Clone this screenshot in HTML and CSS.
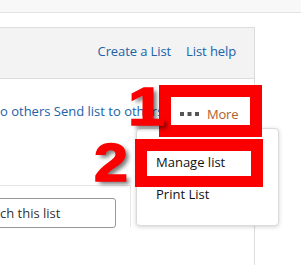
FILE: index.html
```html
<!DOCTYPE html>
<html>
<head>
<meta charset="utf-8">
<link rel="stylesheet" href="styles.css">
</head>
<body>
<div class="topbar"></div>
<div class="panel">
  <div class="panel-head">
    <a class="link" href="#">Create a List</a>
    <a class="link" href="#">List help</a>
  </div>
  <div class="panel-body">
    <div class="actions">
      <span class="send">o others Send list to others</span>
      <button class="more">
        <svg class="dots" width="19" height="4" viewBox="0 0 19 4"><rect x="0" y="0" width="4" height="4"/><rect x="7.5" y="0" width="4" height="4"/><rect x="15" y="0" width="4" height="4"/></svg>
        <span class="more-label">More</span>
      </button>
    </div>
    <div class="list-area">
      <div class="search-col">
        <div class="search">Search this list</div>
      </div>
    </div>
  </div>
</div>

<div class="dropdown">
  <div class="item">Manage list</div>
  <div class="item">Print List</div>
</div>

<div class="mark mark-1"></div>
<div class="mark mark-2"></div>
<span class="num num-1">1</span>
<span class="num num-2">2</span>
</body>
</html>
```
FILE: styles.css
```css
html, body {
  margin: 0;
  padding: 0;
}
body {
  width: 304px;
  height: 265px;
  overflow: hidden;
  background: #fff;
  font-family: "Open Sans", "Liberation Sans", sans-serif;
  font-size: 13px;
  position: relative;
}
.topbar {
  width: 301px;
  height: 12px;
  background: #f8f8f8;
  border-bottom: 1px solid #e3e3e3;
}
.panel {
  margin-top: 14px;
  width: 255px;
  height: 238px;
  border-top: 1px solid #dcdcdc;
  border-right: 1px solid #dcdcdc;
  box-sizing: border-box;
}
.panel-head {
  height: 51px;
  box-sizing: border-box;
  background: #f3f3f3;
  border-bottom: 1px solid #dcdcdc;
  display: flex;
  justify-content: flex-end;
  gap: 15px;
  padding: 14px 18px 0 0;
  line-height: 18px;
  letter-spacing: -0.1px;
}
.link {
  color: #2162a8;
  text-decoration: none;
}
.actions {
  display: flex;
  align-items: baseline;
  padding-top: 23px;
  line-height: 18px;
  height: 30px;
}
.send {
  color: #2162a8;
  white-space: nowrap;
  width: 172px;
  flex: none;
}
.more {
  font: inherit;
  background: none;
  border: 0;
  padding: 0 0 0 8px;
  display: flex;
  align-items: center;
  gap: 8px;
  color: #b0602e;
  line-height: 18px;
  letter-spacing: -0.2px;
}
.dots {
  fill: #555;
}
.list-area {
  margin-top: 53px;
}
.search-col {
  width: 131px;
  height: 42px;
  box-sizing: border-box;
  border-top: 1px solid #e7e7e7;
  border-right: 1px solid #e7e7e7;
  padding-top: 12px;
}
.search {
  margin-left: -38px;
  width: 154px;
  height: 30px;
  box-sizing: border-box;
  border: 1px solid #999;
  border-radius: 3px;
  padding-left: 10px;
  line-height: 28px;
  color: #333;
  white-space: nowrap;
  overflow: hidden;
}
.dropdown {
  position: absolute;
  left: 136px;
  top: 128px;
  width: 143px;
  height: 98px;
  box-sizing: border-box;
  border: 1px solid #dadada;
  border-radius: 4px;
  background: #fff;
  box-shadow: 0 1px 4px rgba(0,0,0,0.18);
  padding: 17px 0 0 19px;
}
.item {
  line-height: 32px;
  color: #111;
}
.mark {
  position: absolute;
  border: 12px solid #fa0000;
  box-sizing: border-box;
}
.mark-1 {
  left: 159px;
  top: 85px;
  width: 103px;
  height: 52px;
}
.mark-2 {
  left: 135px;
  top: 139px;
  width: 128px;
  height: 48px;
  border-bottom-width: 11px;
}
.num {
  position: absolute;
  font-family: "Liberation Sans", Arial, sans-serif;
  font-weight: bold;
  font-size: 53px;
  line-height: 53px;
  color: #fa0000;
  -webkit-text-stroke: 1.5px #fa0000;
  text-shadow: 3px 3px 4px rgba(0,0,0,0.55);
}
.num-1 {
  left: 128px;
  top: 80px;
  transform: scaleX(1.25);
  transform-origin: left top;
}
.num-2 {
  left: 94px;
  top: 136px;
  transform: scaleX(1.15);
  transform-origin: left top;
}
```
